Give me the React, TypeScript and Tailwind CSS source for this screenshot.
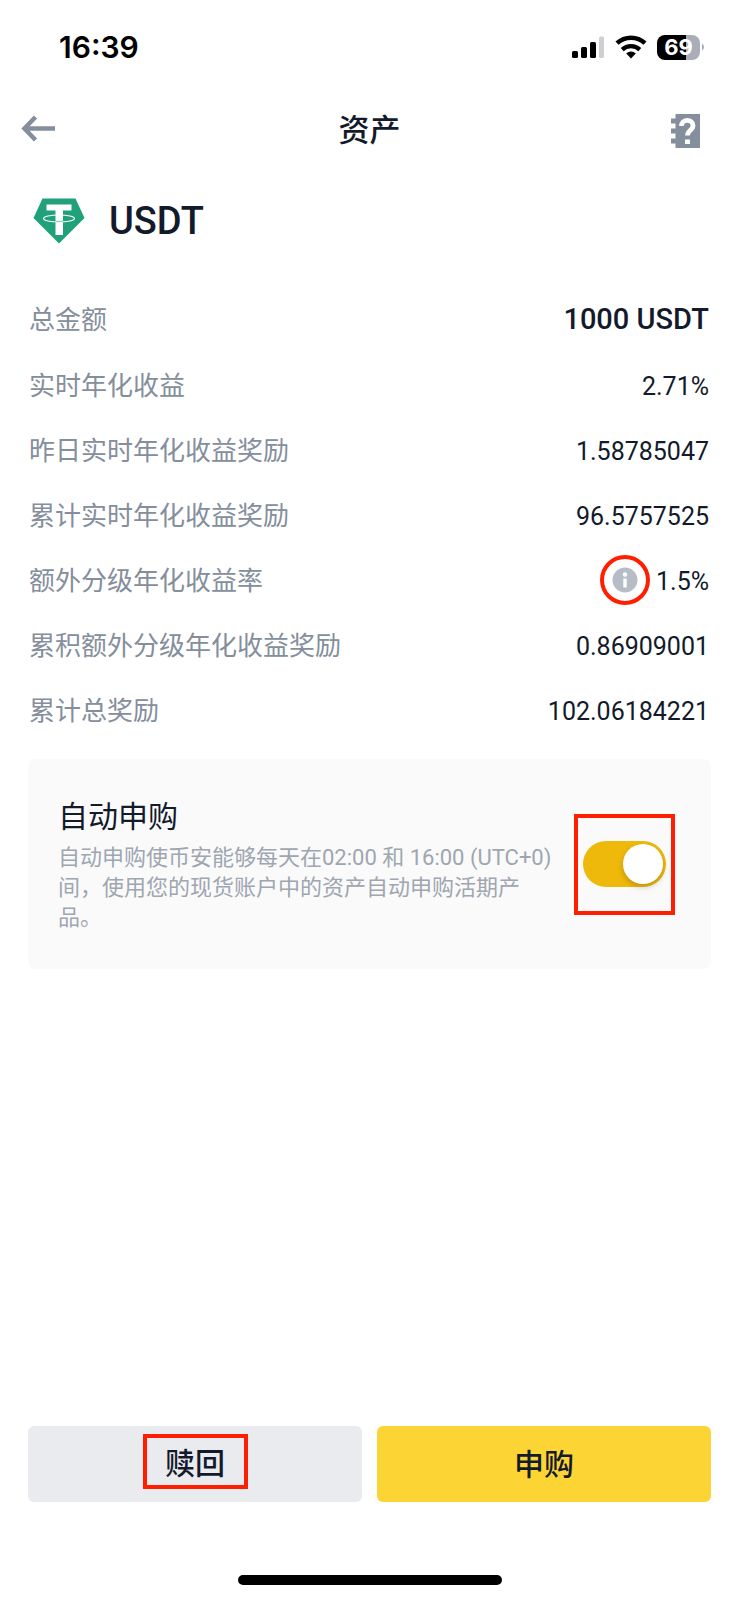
import { useState } from 'react';

const rows = [
  { label: '实时年化收益', value: '2.71%' },
  { label: '昨日实时年化收益奖励', value: '1.58785047' },
  { label: '累计实时年化收益奖励', value: '96.5757525' },
  { label: '额外分级年化收益率', value: '1.5%', info: true },
  { label: '累积额外分级年化收益奖励', value: '0.86909001' },
  { label: '累计总奖励', value: '102.06184221' },
];

function StatusBar() {
  return (
    <div className="flex h-[94px] items-center justify-between pr-[34px] pl-[59px] text-black">
      <span className="font-['Inter',sans-serif] text-[30px] font-semibold">16:39</span>
      <div className="flex items-center gap-[10px]">
        <svg width="34" height="24" viewBox="0 0 34 24" aria-hidden="true">
          <rect x="1" y="16" width="6" height="7" rx="1.5" />
          <rect x="10" y="12" width="6" height="11" rx="1.5" />
          <rect x="19" y="7" width="6" height="16" rx="1.5" />
          <rect x="28" y="1.500" width="5" height="21.500" rx="1.5" fill="#cfcfd3" />
        </svg>
        <svg width="32" height="24" viewBox="0 0 32 24" fill="none" stroke="currentColor" aria-hidden="true">
          <path d="M2 8.2a20.5 20.5 0 0 1 28 0" strokeWidth="4.500" />
          <path d="M7.2 14.6a13 13 0 0 1 17.6 0" strokeWidth="4.200" />
          <path d="M16 23.500l-4.800-5a6.800 6.800 0 0 1 9.600 0z" fill="currentColor" stroke="none" />
        </svg>
        <div className="flex items-center gap-px">
          <div className="flex h-[25px] w-[43px] items-center justify-center rounded-lg bg-linear-to-r from-black from-68% to-[#a9adb8] to-68% font-['Inter',sans-serif] text-[22px] leading-none font-bold text-white">
            69
          </div>
          <svg width="4" height="8" viewBox="0 0 4 8" aria-hidden="true">
            <path d="M1 0.5a4 4 0 0 1 0 7z" fill="#a9adb8" />
          </svg>
        </div>
      </div>
    </div>
  );
}

function Header() {
  return (
    <header className="grid h-[74px] grid-cols-[1fr_auto_1fr] items-center px-5">
      <button type="button" aria-label="返回" className="justify-self-start text-[#848e9c]">
        <svg width="36" height="32" viewBox="0 0 36 32" fill="none" stroke="currentColor" strokeWidth="4.500">
          <path d="M35 13.500H5" />
          <path d="M15.500 2L4.500 13.500l11 11.500" />
        </svg>
      </button>
      <h1 className="text-[31px] font-medium">资产</h1>
      <button type="button" aria-label="帮助" className="justify-self-end pr-[19px] text-[#848e9c]">
        <svg width="30" height="34" viewBox="0 0 30 34" fill="none">
          <path d="M5.500 0H30v34H5.500v-4.500H1v-5h4.500v-5H1v-5h4.500v-5H1v-5h4.500z" fill="currentColor" />
          <path
            d="M11.500 12c0-7.500 11.500-7.500 11.500-0.500c0 5-5.500 4.500-5.500 10"
            stroke="#fff"
            strokeWidth="4.800"
          />
          <path d="M15 25.500h5v4.500h-5z" fill="#fff" />
        </svg>
      </button>
    </header>
  );
}

function TetherLogo() {
  return (
    <svg width="52" height="46" viewBox="0 0 52 46" aria-hidden="true">
      <path d="M9.500 0.500h33L51.500 20 26 45.500 0.500 20z" fill="#21a17a" />
      <path d="M13.500 6.500h25v6h-8.500v24.500h-7.500V12.500h-9z" fill="#fff" />
      <ellipse cx="26" cy="20.500" rx="15.500" ry="3.500" fill="none" stroke="#fff" strokeWidth="1.200" />
      <path d="M22.500 22.800h7.500v1.400h-7.500z" fill="#21a17a" opacity="0.500" />
    </svg>
  );
}

function InfoButton() {
  return (
    <button
      type="button"
      aria-label="说明"
      className="mb-1 flex size-[50px] items-center justify-center rounded-full border-4 border-[#ff1e00]"
    >
      <svg width="26" height="26" viewBox="0 0 26 26">
        <circle cx="13" cy="13" r="12.500" fill="#b7bdc6" />
        <circle cx="13" cy="7.500" r="2.200" fill="#fff" />
        <path d="M11.300 11.500h3.400v9h-3.400z" fill="#fff" />
      </svg>
    </button>
  );
}

export default function App() {
  const [autoSubscribe, setAutoSubscribe] = useState(true);

  return (
    <div className="flex min-h-screen flex-col bg-white font-['Roboto','Noto_Sans_CJK_SC',sans-serif] text-[#121a2b]">
      <StatusBar />
      <Header />

      <main className="flex flex-col px-7">
        <div className="flex h-[106px] items-center gap-6 pl-[5px]">
          <TetherLogo />
          <h2 className="text-[38px] font-medium">USDT</h2>
        </div>

        <dl className="pt-3">
          <div className="flex h-[68px] items-center justify-between pr-0.5 pl-px">
            <dt className="text-[26px] text-[#848e9c]">总金额</dt>
            <dd className="text-[29px] font-medium">1000 USDT</dd>
          </div>
          {rows.map((row) => (
            <div key={row.label} className="flex h-[65px] items-center justify-between pr-0.5 pl-px">
              <dt className="text-[26px] text-[#848e9c]">{row.label}</dt>
              <dd className="flex items-center gap-1.5 text-[25px]">
                {row.info && <InfoButton />}
                {row.value}
              </dd>
            </div>
          ))}
        </dl>

        <section className="mt-[15px] flex items-center justify-between rounded-lg bg-[#fafafa] py-9 pr-9 pl-[30px]">
          <div className="max-w-[505px]">
            <label htmlFor="auto-subscribe" className="block text-[30px] leading-[44px]">
              自动申购
            </label>
            <p className="mt-1 text-[22px] leading-[30px] text-[#9ea6b1]">
              自动申购使币安能够每天在02:00 和 16:00 (UTC+0)间，使用您的现货账户中的资产自动申购活期产品。
            </p>
          </div>
          <div className="flex size-[101px] shrink-0 items-center justify-center border-4 border-[#ff1e00]">
            <input
              id="auto-subscribe"
              type="checkbox"
              role="switch"
              checked={autoSubscribe}
              onChange={(e) => setAutoSubscribe(e.target.checked)}
              className="flex h-[46px] w-[83px] appearance-none items-center rounded-full bg-[#d5d9de] px-[3px] before:size-10 before:rounded-full before:bg-white before:shadow-[0_3px_6px_rgba(0,0,0,0.2)] checked:justify-end checked:bg-[#efb90b]"
            />
          </div>
        </section>
      </main>

      <footer className="mt-auto px-7 pb-[15px]">
        <div className="grid grid-cols-2 gap-[15px] text-[30px] font-medium">
          <button type="button" className="flex h-[76px] items-start justify-center rounded-md bg-[#eaebef] pt-2">
            <span className="flex h-[55px] w-[105px] items-center justify-center border-4 border-[#ff1e00] pt-1">
              赎回
            </span>
          </button>
          <button type="button" className="h-[76px] rounded-md bg-[#fcd535]">
            申购
          </button>
        </div>
        <div className="mx-auto mt-[73px] h-[10px] w-[264px] rounded-full bg-black" />
      </footer>
    </div>
  );
}
